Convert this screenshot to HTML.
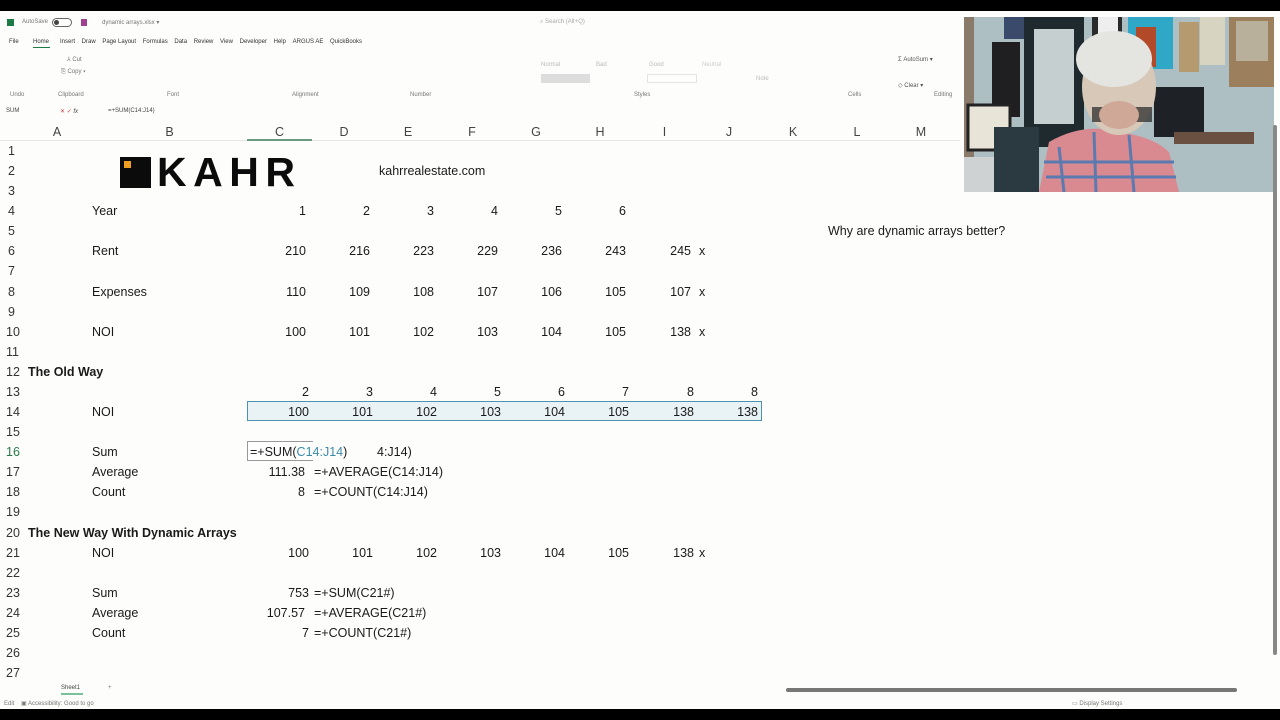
<!DOCTYPE html>
<html><head><meta charset="utf-8">
<style>
*{margin:0;padding:0;box-sizing:border-box}
body{width:1280px;height:720px;overflow:hidden;background:#fdfdfb;font-family:"Liberation Sans",sans-serif;position:relative;color:#1a1a1a}
.t{position:absolute;font-size:12.5px;line-height:20px;white-space:nowrap}
.s{position:absolute;font-size:6px;color:#777;white-space:nowrap}
.h{position:absolute;font-size:12.5px;color:#444;line-height:16px}
</style></head><body>
<div style="position:absolute;left:0;top:0;width:1280px;height:11px;background:#000"></div>
<div style="position:absolute;left:0;top:709px;width:1280px;height:11px;background:#000"></div>

<div style="position:absolute;left:7px;top:19px;width:7px;height:7px;background:#1d7a45"></div>
<div class="s" style="left:22px;top:19px">AutoSave</div>
<div style="position:absolute;left:52px;top:18px;width:20px;height:9px;border:1px solid #666;border-radius:5px"></div>
<div style="position:absolute;left:54px;top:20px;width:5px;height:5px;background:#444;border-radius:3px"></div>
<div style="position:absolute;left:81px;top:19px;width:6px;height:7px;background:#a04090"></div>
<div class="s" style="left:102px;top:19px">dynamic arrays.xlsx ▾</div>
<div class="s" style="left:540px;top:19px;color:#aaa">⌕ Search (Alt+Q)</div>
<div class="s" style="left:9px;top:39px;color:#333">File</div>
<div class="s" style="left:33px;top:39px;color:#333">Home</div>
<div style="position:absolute;left:33px;top:47px;width:17px;height:1px;background:#1d7a45"></div>
<div class="s" style="left:60px;top:39px;color:#333">Insert&nbsp;&nbsp;&nbsp;&nbsp;Draw&nbsp;&nbsp;&nbsp;&nbsp;Page Layout&nbsp;&nbsp;&nbsp;&nbsp;Formulas&nbsp;&nbsp;&nbsp;&nbsp;Data&nbsp;&nbsp;&nbsp;&nbsp;Review&nbsp;&nbsp;&nbsp;&nbsp;View&nbsp;&nbsp;&nbsp;&nbsp;Developer&nbsp;&nbsp;&nbsp;&nbsp;Help&nbsp;&nbsp;&nbsp;&nbsp;ARGUS AE&nbsp;&nbsp;&nbsp;&nbsp;QuickBooks</div>
<div class="s" style="left:67px;top:56px">⅄ Cut</div>
<div class="s" style="left:61px;top:69px">⎘ Copy ▾</div>
<div class="s" style="left:541px;top:62px;color:#bbb">Normal</div>
<div class="s" style="left:596px;top:62px;color:#bbb">Bad</div>
<div class="s" style="left:649px;top:62px;color:#bbb">Good</div>
<div class="s" style="left:702px;top:62px;color:#ccc">Neutral</div>
<div style="position:absolute;left:541px;top:74px;width:49px;height:9px;background:#ddd"></div>
<div style="position:absolute;left:647px;top:74px;width:50px;height:9px;border:1px solid #e4e4e4"></div>
<div class="s" style="left:756px;top:76px;color:#bbb">Note</div>
<div class="s" style="left:898px;top:56px;color:#555">Σ AutoSum ▾</div>
<div class="s" style="left:898px;top:82px;color:#555">◇ Clear ▾</div>
<div class="s" style="left:10px;top:92px">Undo</div>
<div class="s" style="left:58px;top:92px">Clipboard</div>
<div class="s" style="left:167px;top:92px">Font</div>
<div class="s" style="left:292px;top:92px">Alignment</div>
<div class="s" style="left:410px;top:92px">Number</div>
<div class="s" style="left:634px;top:92px">Styles</div>
<div class="s" style="left:848px;top:92px">Cells</div>
<div class="s" style="left:934px;top:92px">Editing</div>
<div class="s" style="left:6px;top:108px;color:#444">SUM</div>
<div class="s" style="left:60px;top:108px;color:#c44">✕ ✓ <i style="color:#444">fx</i></div>
<div class="s" style="left:108px;top:108px;color:#444">=+SUM(C14:J14)</div>

<div style="position:absolute;left:0;top:140px;width:960px;height:1px;background:#e4e4e4"></div>
<div style="position:absolute;left:247px;top:139px;width:65px;height:2px;background:#6a9a80"></div>

<div style="position:absolute;left:247px;top:401px;width:515px;height:20px;background:#e9f3f6;border:1px solid #4d93ad"></div>
<div style="position:absolute;left:247px;top:441px;width:66px;height:20px;border:1px solid #999;border-right:none;background:#fff"></div>

<div id="g"></div>

<div style="position:absolute;left:120px;top:157px;width:31px;height:31px;background:#0b0b0b"></div>
<div style="position:absolute;left:124px;top:161px;width:7px;height:7px;background:#f0a020"></div>
<div style="position:absolute;left:157px;top:150px;font-size:41px;font-weight:bold;letter-spacing:6.5px;line-height:44px;color:#0b0b0b">KAHR</div>

<svg style="position:absolute;left:964px;top:17px" width="310" height="175" viewBox="0 0 310 175">
<rect width="310" height="175" fill="#aebfc4"/>
<rect x="0" y="0" width="10" height="175" fill="#8a7a6a"/>
<rect x="60" y="0" width="60" height="130" fill="#1e2a2e"/>
<rect x="70" y="12" width="40" height="95" fill="#c6cfcf"/>
<rect x="28" y="25" width="28" height="75" fill="#1f1f22"/>
<rect x="40" y="0" width="20" height="22" fill="#3a4a6a"/>
<rect x="128" y="0" width="30" height="28" fill="#2a2a2a"/>
<rect x="134" y="0" width="20" height="22" fill="#eee"/>
<rect x="164" y="0" width="45" height="52" fill="#2fa8c8"/>
<rect x="172" y="10" width="20" height="40" fill="#b24a2a"/>
<rect x="215" y="5" width="20" height="50" fill="#b59a70"/>
<rect x="236" y="0" width="25" height="48" fill="#d8d4c2"/>
<rect x="265" y="0" width="45" height="70" fill="#9c7f5c"/>
<rect x="272" y="4" width="32" height="40" fill="#b9b09c"/>
<rect x="4" y="88" width="42" height="45" fill="#e8e4d8" stroke="#222" stroke-width="3"/>
<rect x="30" y="110" width="45" height="65" fill="#2a3a40"/>
<rect x="190" y="70" width="50" height="50" fill="#1e2226"/>
<rect x="210" y="115" width="80" height="12" fill="#6a5040"/>
<path d="M75 175 L85 125 Q120 105 155 115 Q190 120 205 135 L215 175 Z" fill="#d98a90"/>
<path d="M95 130 L100 175 M130 115 L132 175 M165 118 L170 175 M80 145 L210 145 M82 160 L212 160" stroke="#5a7ab0" stroke-width="3"/>
<ellipse cx="155" cy="70" rx="37" ry="48" fill="#d8c8b8"/>
<ellipse cx="150" cy="42" rx="38" ry="28" fill="#e4e4e0"/>
<rect x="128" y="90" width="60" height="15" fill="#222" opacity=".7"/>
<ellipse cx="155" cy="98" rx="20" ry="14" fill="#d0a898"/>
<rect x="0" y="140" width="30" height="35" fill="#cfd2d2"/>
</svg>

<div style="position:absolute;left:1273px;top:125px;width:4px;height:530px;background:#888;border-radius:2px"></div>
<div style="position:absolute;left:786px;top:688px;width:451px;height:4px;background:#777;border-radius:2px"></div>
<div class="s" style="left:61px;top:685px;color:#444">Sheet1</div>
<div style="position:absolute;left:61px;top:693px;width:22px;height:2px;background:#7bc09a"></div>
<div class="s" style="left:108px;top:685px">+</div>
<div class="s" style="left:4px;top:700px">Edit&nbsp;&nbsp;&nbsp;&nbsp;▣ Accessibility: Good to go</div>
<div class="s" style="left:1072px;top:700px">▭ Display Settings</div>

<script>
var cols={A:[22,92],B:[92,247],C:[247,312],D:[312,376],E:[376,440],F:[440,504],G:[504,568],H:[568,632],I:[632,697],J:[697,761],K:[761,825],L:[825,889],M:[889,953]};
var g=document.getElementById('g'),h='';
for(var k in cols){var c=(cols[k][0]+cols[k][1])/2;h+='<div class="h" style="left:'+(c-10)+'px;width:20px;text-align:center;top:124px">'+k+'</div>';}
function y(r){return 141+(r-1)*20.08;}
for(var r=1;r<=27;r++){h+='<div class="t" style="left:'+(r<10?8:6)+'px;top:'+y(r)+'px;color:'+(r==16?'#2a7a4a':'#333')+'">'+r+'</div>';}
function R(t,x,r){h+='<div class="t" style="right:'+(1280-x)+'px;top:'+y(r)+'px">'+t+'</div>';}
function L(t,x,r,b){h+='<div class="t" style="left:'+x+'px;top:'+y(r)+'px'+(b?';font-weight:bold':'')+'">'+t+'</div>';}
var cr=[312,376,440,504,568,632,697,761];
L('kahrrealestate.com',379,2);
L('Year',92,4);[1,2,3,4,5,6].forEach(function(v,i){R(v,cr[i]-6,4)});
L('Rent',92,6);[210,216,223,229,236,243,245].forEach(function(v,i){R(v,cr[i]-6,6)});L('x',699,6);
L('Expenses',92,8);[110,109,108,107,106,105,107].forEach(function(v,i){R(v,cr[i]-6,8)});L('x',699,8);
L('NOI',92,10);[100,101,102,103,104,105,138].forEach(function(v,i){R(v,cr[i]-6,10)});L('x',699,10);
L('The Old Way',28,12,1);
[2,3,4,5,6,7,8,8].forEach(function(v,i){R(v,cr[i]-3,13)});
L('NOI',92,14);[100,101,102,103,104,105,138,138].forEach(function(v,i){R(v,cr[i]-3,14)});
L('Sum',92,16);L('=+SUM(<span style="color:#3a8aaa">C14:J14</span>)',250,16);L('4:J14)',377,16);
L('Average',92,17);R('111.38',305,17);L('=+AVERAGE(C14:J14)',314,17);
L('Count',92,18);R('8',305,18);L('=+COUNT(C14:J14)',314,18);
L('The New Way With Dynamic Arrays',28,20,1);
L('NOI',92,21);[100,101,102,103,104,105,138].forEach(function(v,i){R(v,cr[i]-3,21)});L('x',699,21);
L('Sum',92,23);R('753',309,23);L('=+SUM(C21#)',314,23);
L('Average',92,24);R('107.57',305,24);L('=+AVERAGE(C21#)',314,24);
L('Count',92,25);R('7',309,25);L('=+COUNT(C21#)',314,25);
L('Why are dynamic arrays better?',828,5);
g.innerHTML=h;
</script>
</body></html>
